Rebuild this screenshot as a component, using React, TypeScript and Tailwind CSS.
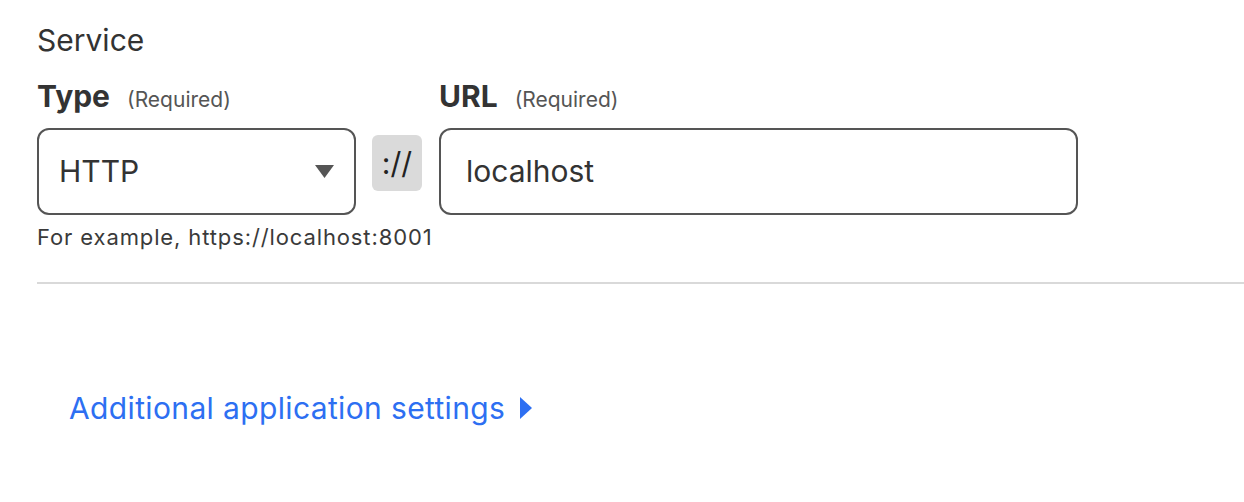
export default function App() {
  return (
    <div className="min-h-[502px] w-[1244px] bg-white font-['Inter','Noto_Sans',sans-serif] text-[#333]">
      <div className="pl-[37px] pt-[22px]">
        <h2 className="text-[30px] leading-[36px] font-normal">Service</h2>

        <div className="mt-[20px] flex items-start">
          <div className="flex w-[319px] flex-col">
            <label className="flex items-baseline gap-[17px]">
              <span className="text-[30px] leading-[36px] font-bold">Type</span>
              <span className="text-[21px] text-[#555]">(Required)</span>
            </label>
            <div className="mt-[12px] flex h-[87px] w-[319px] items-center justify-between rounded-[12px] border-2 border-[#555] pl-[20px] pr-[20px]">
              <span className="text-[30px]">HTTP</span>
              <svg width="19" height="13" viewBox="0 0 19 13" aria-hidden>
                <path d="M0 0h19L9.5 13Z" fill="#555" />
              </svg>
            </div>
            <p className="mt-[9px] whitespace-nowrap text-[22px] leading-[26px] tracking-[0.04em] text-[#3a3a3a]">
              For example, https://localhost:8001
            </p>
          </div>

          <div className="ml-[16px] mt-[57px] flex h-[56px] w-[50px] items-center justify-center rounded-[6px] bg-[#dadada] text-[30px] text-[#222]">
            ://
          </div>

          <div className="ml-[17px] flex flex-col">
            <label className="flex items-baseline gap-[17px]">
              <span className="text-[30px] leading-[36px] font-bold">URL</span>
              <span className="text-[21px] text-[#555]">(Required)</span>
            </label>
            <div className="mt-[12px] flex h-[87px] w-[639px] items-center rounded-[12px] border-2 border-[#555] pl-[25px]">
              <span className="text-[30px]">localhost</span>
            </div>
          </div>
        </div>

        <hr className="mt-[32px] border-t-2 border-[#d9d9d9]" />

        <a
          href="#"
          className="mt-[106px] ml-[32px] inline-flex items-center gap-[15px] text-[30px] leading-[36px] tracking-[0.012em] text-[#2d6ff2]"
        >
          Additional application settings
          <svg width="12" height="22" viewBox="0 0 12 22" aria-hidden>
            <path d="M0 0l12 11L0 22Z" fill="#2d6ff2" />
          </svg>
        </a>
      </div>
    </div>
  );
}
